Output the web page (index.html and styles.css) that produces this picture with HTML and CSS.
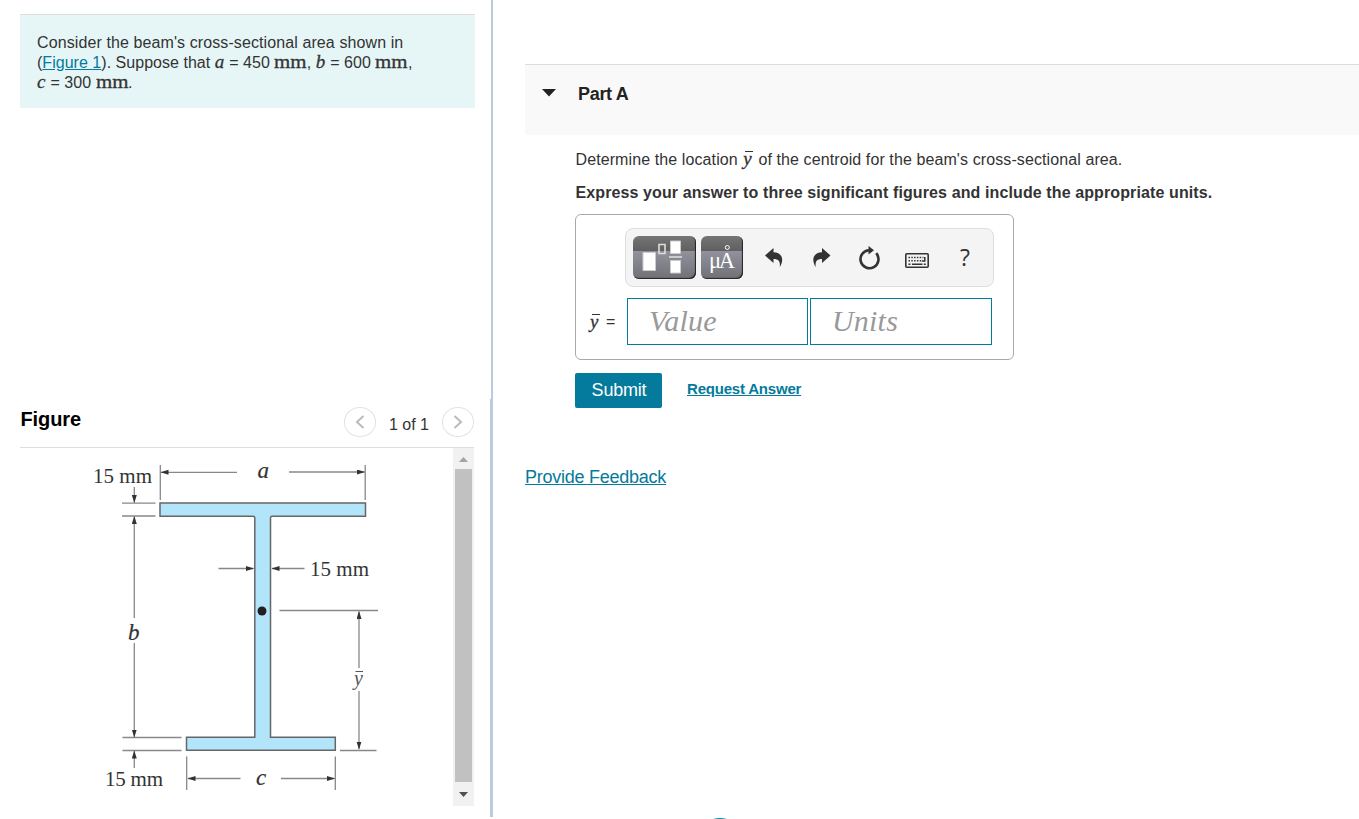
FILE: index.html
```html
<!DOCTYPE html>
<html lang="en">
<head>
  <meta charset="UTF-8">
  <title>Part A</title>
  <link rel="stylesheet" href="styles.css">
</head>
<body>
<div class="page">
  <!-- left column -->
  <div class="left">
    <div class="left-inner">
      <div class="intro">
        <div class="line l1">Consider the beam's cross-sectional area shown in</div>
        <div class="line l2">(<a href="#">Figure 1</a>). Suppose that <i class="m">a</i> = 450 <span class="mm">mm</span>, <i class="m">b</i> = 600 <span class="mm">mm</span>,</div>
        <div class="line l3"><i class="m c">c</i> = 300 <span class="mm">mm</span>.</div>
      </div>
      <div class="figure-head">
        <h2>Figure</h2>
        <div class="pager">
          <span class="round"><svg width="10" height="14" viewBox="0 0 10 14"><path d="M8.500 1l-6.500 6 6.500 6"/></svg></span>
          <span class="count">1 of 1</span>
          <span class="round"><svg width="10" height="14" viewBox="0 0 10 14"><path d="M1.500 1L8 7l-6.500 6"/></svg></span>
        </div>
      </div>
      <div class="figure-body">
        <svg class="beam" width="433" height="358" viewBox="20 448 433 358">
          <defs>
            <marker id="arrow" markerWidth="9" markerHeight="6" refX="7.5" refY="2.5" orient="auto-start-reverse" markerUnits="userSpaceOnUse">
              <path d="M0 0L8 2.5L0 5z" fill="#333"/>
            </marker>
          </defs>
          <!-- section -->
          <path class="shape" d="M160 503H365.500V516.300H272Q270.500 516.300 270.500 518V737.300H335.300V750.300H186.500V737.300H254.800V518Q254.800 516.300 253 516.300H160z"/>
          <circle cx="262" cy="611" r="4.500" fill="#231f20"/>
          <!-- extension lines -->
          <g class="dim">
            <path d="M160.300 465V500M365.200 465V500M122 503.200H155.500M122 516H155.500"/>
            <path d="M122.500 737.500H181.500M122.500 750.500H181.500M186.700 756.500V790M335.300 756.500V790"/>
            <path d="M279.500 610.500H378M340 750.500H376.500"/>
          </g>
          <!-- dimension lines -->
          <g class="dim" marker-end="url(#arrow)">
            <path d="M237 472.300H161"/>
            <path d="M289 472H364.500"/>
            <path d="M134.300 487V502.500"/>
            <path d="M134.300 618V516.500"/>
            <path d="M134.300 643V737"/>
            <path d="M134.300 768V751"/>
            <path d="M218.500 568.500H253.500"/>
            <path d="M304.500 568.500H272"/>
            <path d="M359 668V611.500"/>
            <path d="M359 691V749"/>
            <path d="M240.500 778.500H188"/>
            <path d="M281 778.500H334.500"/>
          </g>
          <g class="label">
            <text x="93" y="482.600" textLength="59">15 mm</text>
            <text x="310" y="576" textLength="59">15 mm</text>
            <text x="105" y="785.500" textLength="58">15 mm</text>
            <text class="var" x="257.500" y="478">a</text>
            <text class="var" x="128" y="639.500">b</text>
            <text class="var" x="256" y="784.500">c</text>
            <text class="vary" x="354" y="685">y</text>
          </g>
          <path d="M355.500 671.500H363" stroke="#555"/>
        </svg>
        <div class="scrollbar">
          <svg width="21" height="21"><path d="M6 14h9l-4.500-5z" fill="#a3a3a3"/></svg>
          <div class="thumb"></div>
          <svg width="21" height="24"><path d="M6 10h9l-4.500 5z" fill="#505050"/></svg>
        </div>
      </div>
    </div>
  </div>
  <div class="divider"><div class="div-top"></div><div class="div-bottom"></div></div>

  <!-- right column -->
  <div class="right">
    <div class="part-head">
      <svg width="14" height="8" viewBox="0 0 14 8"><path d="M0 0h14L7 7.500z" fill="#222"/></svg>
      <h3>Part A</h3>
    </div>
    <div class="part-body">
      <p class="question">Determine the location <i class="m bar">y</i> of the centroid for the beam's cross-sectional area.</p>
      <p class="instr">Express your answer to three significant figures and include the appropriate units.</p>
      <div class="answer">
        <div class="toolbar">
          <span class="tbtn templates">
            <svg width="63" height="43" viewBox="0 0 63 43">
              <g fill="#fff" stroke="#ccc">
                <path d="M10 16.500h12.500v18H10z"/>
                <path d="M37.500 5h10v12.500h-10z"/>
                <path d="M37.500 24.500h10V37h-10z"/>
              </g>
              <path d="M26 8.500h6v9h-6z" fill="none" stroke="#ddd" stroke-width="1.600"/>
              <path d="M36 21h13" stroke="#ddd" stroke-width="1.600"/>
            </svg>
          </span>
          <span class="tbtn symbols">
            <svg width="42" height="43" viewBox="0 0 42 43">
              <text x="8" y="31.500" textLength="26">μA</text>
              <circle cx="26.300" cy="11.500" r="2" fill="none" stroke="#fff"/>
            </svg>
          </span>
          <span class="ico"><svg width="20" height="20" viewBox="0 0 20 20"><path d="M1 7.500L9.500 0v4.300c6.500 0 9.500 4.500 8.500 9.200-.3 1.800-1 3.800-2.200 5.500.6-5.200-.8-8-6.300-8v4z"/></svg></span>
          <span class="ico"><svg width="20" height="20" viewBox="0 0 20 20"><path d="M18.500 7.500L10 0v4.300c-6.500 0-9.500 4.500-8.500 9.200.3 1.800 1 3.800 2.200 5.500-.6-5.200.8-8 6.300-8v4z"/></svg></span>
          <span class="ico"><svg width="22" height="24" viewBox="0 0 22 24"><path d="M18.200 7.200A9 9 0 1 1 11 4.200" fill="none" stroke="#333" stroke-width="2.600"/><path d="M10.500 0l5.500 4.300-5.500 4.200z"/></svg></span>
          <span class="ico kb">
            <svg width="24" height="15" viewBox="0 0 24 15">
              <rect x=".8" y=".8" width="22.400" height="13.400" rx="1" fill="none" stroke="#333" stroke-width="1.600"/>
              <path d="M3.500 4.500h15M3.500 7.800h13" stroke="#333" stroke-width="1.500" stroke-dasharray="1.500 1.300"/>
              <path d="M3.500 11.200h2M7 11.200h10.500M18.800 11.200h2M19.800 4v4h-3" fill="none" stroke="#333" stroke-width="1.500"/>
            </svg>
          </span>
          <span class="ico help">?</span>
        </div>
        <div class="fields">
          <span class="lhs"><i class="m bar">y</i><span>=</span></span>
          <div class="field value">Value</div>
          <div class="field units">Units</div>
        </div>
      </div>
      <div class="actions">
        <span class="submit">Submit</span>
        <a class="request" href="#">Request Answer</a>
      </div>
    </div>
    <a class="feedback" href="#">Provide Feedback</a>
  </div>
  <div class="logo-circle"></div>
</div>
</body>
</html>
```
FILE: styles.css
```css
* {
  box-sizing: border-box;
  margin: 0;
  padding: 0;
}
body {
  font-family: "Liberation Sans", Arial, sans-serif;
  font-size: 16px;
  color: #333;
  background: #fff;
}
a {
  color: #047a9c;
}
svg {
  display: block;
}
.page {
  display: flex;
  height: 819px;
  position: relative;
  overflow: hidden;
}

/* left */
.left {
  width: 490px;
  flex: none;
}
.left-inner {
  padding: 14px 0 0 20px;
}
.intro {
  width: 455px;
  height: 94px;
  padding: 18px 17px 0;
  border-top: 1px solid #ddd;
  background: #e6f6f7;
}
.line {
  height: 20px;
  line-height: 20px;
  letter-spacing: .1px;
  white-space: nowrap;
}
.l2, .l3 {
  line-height: 18px;
  letter-spacing: .03px;
}
/* math letters */
.m, .mm {
  display: inline-block;
  font-family: "Liberation Serif", "Times New Roman", serif;
  font-size: 19px;
  line-height: 17px;
  letter-spacing: 0;
  -webkit-text-stroke: .3px #333;
}
.m {
  width: 10px;
}
.c {
  width: 9px;
}
.mm {
  width: 32.5px;
  transform: scaleX(1.1);
  transform-origin: 0 0;
}
.bar {
  height: 17px;
  background: linear-gradient(#333, #333) 2px 1px / 8px 1px no-repeat;
}
.figure-head {
  width: 454px;
  height: 41px;
  margin-top: 299px;
  display: flex;
  justify-content: space-between;
  border-bottom: 1px solid #ddd;
}
.figure-head h2 {
  padding-left: .5px;
  font-size: 20px;
  line-height: 24px;
  letter-spacing: -.1px;
  color: #000;
}
.pager {
  display: flex;
  gap: 12.5px;
}
.round {
  width: 32.5px;
  height: 30px;
  border: 1px solid #e3e3e3;
  border-radius: 50%;
  display: flex;
  align-items: center;
  justify-content: center;
}
.round path {
  fill: none;
  stroke: #bbb;
  stroke-width: 2;
}
.count {
  line-height: 35px;
}
.figure-body {
  display: flex;
  width: 454px;
  height: 358px;
}
.shape {
  fill: #b3e5fa;
  stroke: #666;
  stroke-width: 1.5;
}
.dim {
  fill: none;
  stroke: #888;
  stroke-width: 1.3;
}
.label {
  font-family: "Liberation Serif", "Times New Roman", serif;
  font-size: 21px;
  fill: #333;
}
.label .var {
  font-size: 23px;
  font-style: italic;
  stroke: #333;
  stroke-width: .2px;
}
.label .vary {
  font-size: 20px;
  font-style: italic;
  fill: #555;
}
.scrollbar {
  width: 21px;
  background: #f1f1f1;
}
.thumb {
  width: 17px;
  height: 313px;
  margin-left: 2px;
  background: #c1c1c1;
}

/* divider */
.divider {
  width: 3px;
  flex: none;
}
.div-top {
  height: 399px;
  margin-left: 1px;
  background: #b8ccdd;
}
.div-bottom {
  height: 418px;
  background: #b8ccdd;
}

/* right */
.right {
  flex: 1;
  padding: 64px 0 0 32px;
}
.part-head {
  height: 71px;
  padding: 18px 0 0 17px;
  display: flex;
  gap: 22px;
  background: #f9f9f9;
  border-top: 1px solid #ddd;
}
.part-head svg {
  margin-top: 6px;
}
.part-head h3 {
  font-size: 18px;
  line-height: 23px;
  letter-spacing: -.3px;
  color: #222;
}
.part-body {
  padding: 15px 0 0 50px;
}
.question, .instr {
  height: 20px;
  line-height: 20px;
  letter-spacing: .11px;
  white-space: nowrap;
}
.question {
  padding-left: .5px;
  letter-spacing: .1px;
}
.question .m {
  width: 10.5px;
  margin-left: 1px;
}
.instr {
  margin-top: 13px;
  padding-left: .5px;
  font-weight: bold;
}
.answer {
  width: 439px;
  height: 146px;
  margin-top: 11px;
  padding: 13px 0 0;
  border: 1px solid #aaa;
  border-radius: 6px;
}
.toolbar {
  width: 369px;
  height: 59px;
  margin-left: 49px;
  padding: 7px;
  display: flex;
  background: #f4f4f4;
  border: 1px solid #ddd;
  border-radius: 8px;
}
.tbtn {
  flex: none;
  height: 43px;
  border-radius: 6px;
  background: linear-gradient(#757575 0, #606060 34%, #92929e 35%, #707076 100%);
  box-shadow: inset -1px -1px 1px #222;
}
.templates {
  width: 63px;
}
.symbols {
  width: 42px;
  margin: 0 7px 0 5px;
}
.symbols text {
  font-family: "Liberation Serif", "Times New Roman", serif;
  font-size: 22.5px;
  fill: #fff;
}
.ico {
  flex: none;
  width: 47.8px;
  height: 43px;
  display: flex;
  align-items: center;
  justify-content: center;
  fill: #333;
}
.kb {
  padding-top: 5px;
}
.help {
  padding-bottom: 2px;
  font-family: "Open Sans", "Noto Sans", sans-serif;
  font-size: 23px;
}
.fields {
  display: flex;
  margin-top: 11px;
}
.lhs {
  width: 51px;
  padding: 15px 0 0 14px;
  display: flex;
  gap: 6px;
  line-height: 17px;
}
.lhs .m {
  line-height: 18px;
}
.field {
  width: 181px;
  height: 47px;
  padding-left: 21px;
  border: 1px solid #047a9c;
  font: italic 30px/44px "Liberation Serif", "Times New Roman", serif;
  letter-spacing: .2px;
  color: #999;
}
.units {
  width: 182px;
  margin-left: 2px;
}
.actions {
  display: flex;
  margin-top: 13px;
}
.submit {
  width: 87px;
  height: 35px;
  padding-left: 1px;
  border-radius: 2px;
  background: #047a9c;
  color: #fff;
  font-size: 18px;
  line-height: 34px;
  letter-spacing: -.2px;
  text-align: center;
}
.request {
  margin-left: 25px;
  font-size: 15px;
  font-weight: bold;
  line-height: 32px;
  letter-spacing: -.2px;
}
.feedback {
  display: inline-block;
  margin-top: 58px;
  font-size: 18px;
  line-height: 22px;
  letter-spacing: -.25px;
}
/* only the tip of the circle shows at the bottom edge */
.logo-circle {
  position: absolute;
  left: 696px;
  top: 818px;
  width: 48px;
  height: 48px;
  border-radius: 50%;
  background: #048cac;
}
```
